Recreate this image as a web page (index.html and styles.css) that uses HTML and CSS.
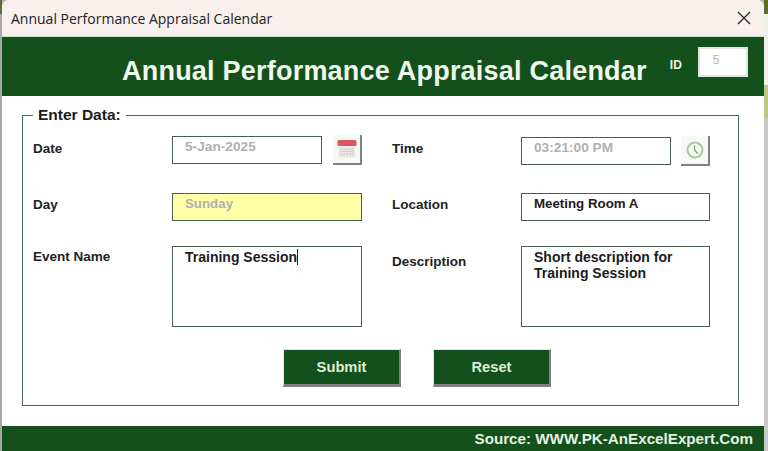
FILE: index.html
```html
<!DOCTYPE html>
<html lang="en">
<head>
  <meta charset="UTF-8">
  <title>Annual Performance Appraisal Calendar</title>
  <link rel="stylesheet" href="styles.css">
</head>
<body>
  <div class="window">
    <div class="titlebar">
      <span class="titlebar-text">Annual Performance Appraisal Calendar</span>
      <svg class="close-icon" width="14" height="14" viewBox="0 0 14 14">
        <path d="M1 1L13 13M13 1L1 13" stroke="#222" stroke-width="1.2" fill="none"/>
      </svg>
    </div>

    <div class="header">
      <h1 class="header-title">Annual Performance Appraisal Calendar</h1>
      <span class="id-label">ID</span>
      <div class="id-box">5</div>
    </div>

    <fieldset class="form-box">
      <legend class="form-legend">Enter Data:</legend>
      <div class="form-grid">
        <label class="field-label label-row1">Date</label>
        <div class="field-with-btn">
          <div class="input input-short input-muted">5-Jan-2025</div>
          <button class="icon-btn">
            <svg width="22" height="22" viewBox="0 0 22 22">
              <rect x="2" y="3" width="18" height="17" fill="#f1eeee"/>
              <rect x="1.5" y="2" width="19" height="6" rx="1.5" fill="#d9585a"/>
              <path d="M4 11H18M4 13.5H18M4 16H18M5 10V18.5M8 10V18.5M11 10V18.5M14 10V18.5M17 10V18.5" stroke="#cfcfcf" stroke-width="1"/>
            </svg>
          </button>
        </div>
        <label class="field-label label-right label-row1">Time</label>
        <div class="field-with-btn field-nudge">
          <div class="input input-short input-muted">03:21:00 PM</div>
          <button class="icon-btn">
            <svg width="22" height="22" viewBox="0 0 22 22">
              <circle cx="11" cy="11" r="7.5" fill="#f4f7f0" stroke="#a9c9a0" stroke-width="2"/>
              <path d="M10.5 6.5V11L13.5 14.5" stroke="#7d9a80" stroke-width="1.2" fill="none"/>
            </svg>
          </button>
        </div>

        <label class="field-label label-row2">Day</label>
        <div class="input input-muted input-yellow">Sunday</div>
        <label class="field-label label-right label-row2">Location</label>
        <div class="input">Meeting Room A</div>

        <label class="field-label label-row3">Event Name</label>
        <div class="input input-tall">Training Session<span class="caret"></span></div>
        <label class="field-label label-right label-low">Description</label>
        <div class="input input-tall">Short description for Training Session</div>
      </div>

      <div class="button-group">
        <button class="btn">Submit</button>
        <button class="btn">Reset</button>
      </div>
    </fieldset>

    <div class="footer">Source: WWW.PK-AnExcelExpert.Com</div>
  </div>
</body>
</html>
```

FILE: styles.css
```css
/* Global Styles */
body {
  margin: 0;
  padding: 0 4px 0 2px;
  box-sizing: border-box;
  height: 451px;
  overflow: hidden;
  font-family: 'Liberation Sans', Arial, sans-serif;
  background-color: #b4b4b0;
  background-image:
    linear-gradient(to bottom, #5d6b2c 0 14px, #f0f0ea 14px 85px, #b9c98a 85px 118px, #c9c9c6 118px),
    linear-gradient(to bottom, #5d6b2c 0 14px, #a8a8a4 14px);
  background-repeat: no-repeat;
  background-position: right top, left top;
  background-size: 4px 100%, 2px 100%;
}

.window {
  height: 451px;
  display: flex;
  flex-direction: column;
  background: #fff;
  border-top-left-radius: 7px;
  border-top-right-radius: 7px;
  overflow: hidden;
}

/* Title bar */
.titlebar {
  height: 37px;
  flex: none;
  box-sizing: border-box;
  padding: 0 13px 0 9px;
  display: flex;
  justify-content: space-between;
  align-items: center;
  background-color: #f7f0ed;
  border-bottom: 1px solid #cfe0c8;
}
.titlebar-text {
  font-family: 'Open Sans', sans-serif;
  font-size: 14px;
  color: #222;
}

/* Header */
.header {
  height: 59px;
  flex: none;
  display: flex;
  align-items: flex-start;
  background-color: #14501c;
  color: #f0f8ec;
}
.header-title {
  margin: 19px 0 0 120px;
  font-size: 27px;
  line-height: 30px;
  font-weight: bold;
  letter-spacing: 0.22px;
  white-space: nowrap;
}
.id-label {
  margin: 21px 0 0 23px;
  font-size: 12px;
  font-weight: bold;
}
.id-box {
  width: 50px;
  height: 30px;
  box-sizing: border-box;
  margin: 10px 0 0 16px;
  padding-left: 13px;
  line-height: 23px;
  font-size: 12px;
  color: #b5b5b5;
  background: #fff;
  border: 2px solid #dfe6dc;
}

/* Form */
.form-box {
  width: 717px;
  height: 300px;
  flex: none;
  box-sizing: border-box;
  margin: 10px 0 0 20px;
  padding: 0 0 0 10px;
  border: 1px solid #4d6b55;
  min-inline-size: 0;
}
.form-legend {
  margin-left: 0;
  padding: 0 5px;
  font-size: 15.5px;
  font-weight: bold;
  color: #1c1c1c;
}
.form-grid {
  display: grid;
  grid-template-columns: 139px 190px 159px 189px;
  grid-template-rows: 57px 53px 81px;
  margin-top: 12px;
}
.field-label {
  font-size: 13.5px;
  font-weight: bold;
  color: #222;
}
.label-right {
  padding-left: 30px;
}
.label-row1 {
  padding-top: 5px;
}
.label-row2 {
  padding-top: 4px;
}
.label-row3 {
  padding-top: 3px;
}
.label-low {
  padding-top: 8px;
}
.field-with-btn {
  display: flex;
  justify-content: space-between;
  align-items: flex-start;
}
.field-nudge {
  margin-top: 1px;
}
.input {
  height: 28px;
  box-sizing: border-box;
  padding: 2px 12px;
  border: 1px solid #4a5f4e;
  background: #fff;
  font-size: 13.3px;
  line-height: 16px;
  font-weight: bold;
  color: #1c1c1c;
}
.input-short {
  width: 150px;
  font-size: 13.7px;
}
.input-muted {
  color: #b0b0b0;
}
.input-yellow {
  background: #ffffa8;
}
.input-tall {
  height: 81px;
  font-size: 14px;
}
.caret {
  display: inline-block;
  width: 1px;
  height: 16px;
  vertical-align: -3px;
  background: #222;
}
.icon-btn {
  width: 29px;
  height: 30px;
  margin-top: -1px;
  padding: 0;
  display: flex;
  align-items: center;
  justify-content: center;
  background: #f8f8f5;
  border: none;
  border-right: 2px solid #7c847c;
  border-bottom: 2px solid #7c847c;
}

.button-group {
  display: flex;
  gap: 32px;
  margin: 22px 0 0 250px;
}
.btn {
  width: 118px;
  height: 38px;
  padding: 0;
  background: #14501c;
  color: #dcefd6;
  font-family: inherit;
  font-size: 14.7px;
  font-weight: bold;
  border-top: 1px solid #dfe6dc;
  border-left: 1px solid #dfe6dc;
  border-right: 2px solid #7c847c;
  border-bottom: 3px solid #7c847c;
}

/* Footer */
.footer {
  height: 25px;
  flex: none;
  margin-top: auto;
  padding-right: 11px;
  text-align: right;
  line-height: 25px;
  font-size: 15.2px;
  font-weight: bold;
  color: #e6f2e0;
  background-color: #14501c;
}
```
